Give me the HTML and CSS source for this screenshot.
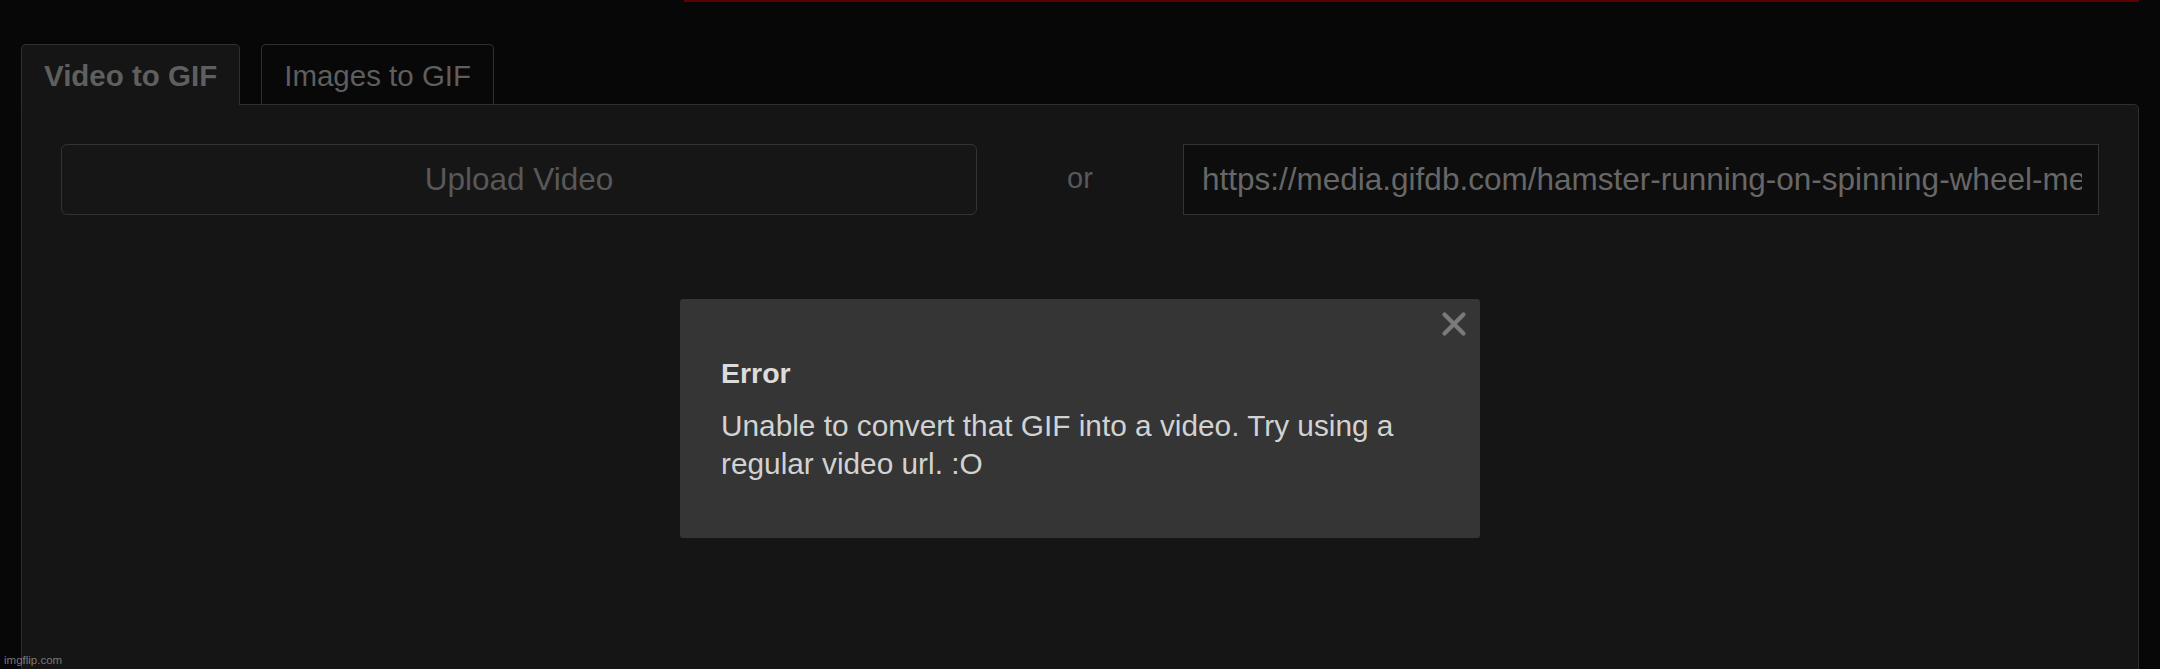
FILE: index.html
```html
<!DOCTYPE html>
<html lang="en">
<head>
<meta charset="utf-8">
<title>Video to GIF</title>
<link rel="stylesheet" href="styles.css">
</head>
<body>
<div class="topbar"><div class="topbar-line"></div></div>
<main class="page">
  <nav class="tabs">
    <div class="tab tab-active">Video to GIF</div>
    <div class="tab">Images to GIF</div>
  </nav>
  <section class="panel">
    <div class="source-row">
      <button class="upload-btn" type="button">Upload Video</button>
      <div class="or">or</div>
      <input class="url-input" type="text" value="https://media.gifdb.com/hamster-running-on-spinning-wheel-meme.gif" readonly>
    </div>
    <div class="modal">
      <svg class="modal-close" width="26" height="26" viewBox="0 0 26 26" aria-hidden="true">
        <path d="M3.5 3.5 L22.5 22.5 M22.5 3.5 L3.5 22.5" stroke="#7a7a7a" stroke-width="4.2" stroke-linecap="round" fill="none"/>
      </svg>
      <div class="modal-title">Error</div>
      <div class="modal-body">Unable to convert that GIF into a video. Try using a regular video url. :O</div>
    </div>
  </section>
</main>
<div class="watermark">imgflip.com</div>
</body>
</html>
```

FILE: styles.css
```css
html, body {
  margin: 0;
  padding: 0;
  height: 669px;
  overflow: hidden;
}
body {
  background: #070707;
  font-family: "Liberation Sans", Arial, Helvetica, sans-serif;
  position: relative;
}
.topbar {
  height: 2px;
  display: flex;
}
.topbar-line {
  margin-left: 684px;
  width: 1455px;
  height: 2px;
  background: #5c0202;
}
.page {
  padding: 42px 21px 0 21px;
}
.tabs {
  display: flex;
  gap: 21px;
  align-items: flex-start;
  position: relative;
  z-index: 2;
}
.tab {
  box-sizing: border-box;
  height: 60px;
  padding: 3px 22px 0 22px;
  line-height: 56px;
  font-size: 29.5px;
  color: #5e5e5e;
  background: #080808;
  border: 1px solid #303030;
  border-bottom: none;
  border-radius: 5px 5px 0 0;
  white-space: nowrap;
}
.tab-active {
  height: 61px;
  margin-bottom: -1px;
  background: #151515;
  font-weight: bold;
  color: #5f5f5f;
}
.panel {
  position: relative;
  margin-top: 0;
  height: 700px;
  background: #151515;
  border: 1px solid #2f2f2f;
  border-radius: 0 5px 0 0;
  padding: 39px 39px 0 39px;
}
.source-row {
  display: grid;
  grid-template-columns: 1fr 206px 1fr;
  height: 71px;
}
.upload-btn {
  box-sizing: border-box;
  height: 71px;
  background: #161616;
  border: 1px solid #333333;
  border-radius: 6px;
  color: #585858;
  font-family: inherit;
  font-size: 31.5px;
  padding: 0;
}
.or {
  display: flex;
  align-items: center;
  justify-content: center;
  color: #585858;
  font-size: 29px;
  padding-bottom: 2px;
}
.url-input {
  box-sizing: border-box;
  height: 71px;
  width: 100%;
  background: #0d0d0d;
  border: 1px solid #333333;
  border-radius: 0;
  padding: 0 16px 0 18px;
  color: #676767;
  font-family: inherit;
  font-size: 31.5px;
  outline: none;
}
.modal {
  position: absolute;
  top: 194px;
  left: 50%;
  margin-left: -400px;
  width: 800px;
  box-sizing: border-box;
  height: 239px;
  padding: 55px 41px 0 41px;
  background: #353535;
  border-radius: 3px;
}
.modal-close {
  position: absolute;
  top: 12px;
  right: 13px;
}
.modal-title {
  font-weight: bold;
  font-size: 28.5px;
  line-height: 38px;
  color: #dcdcdc;
  margin-bottom: 15px;
}
.modal-body {
  font-size: 29.8px;
  line-height: 38px;
  color: #d2d2d2;
  max-width: 700px;
}
.watermark {
  position: absolute;
  left: 4px;
  bottom: 3px;
  font-size: 11.5px;
  color: rgba(150, 150, 150, 0.8);
  z-index: 5;
}
```
